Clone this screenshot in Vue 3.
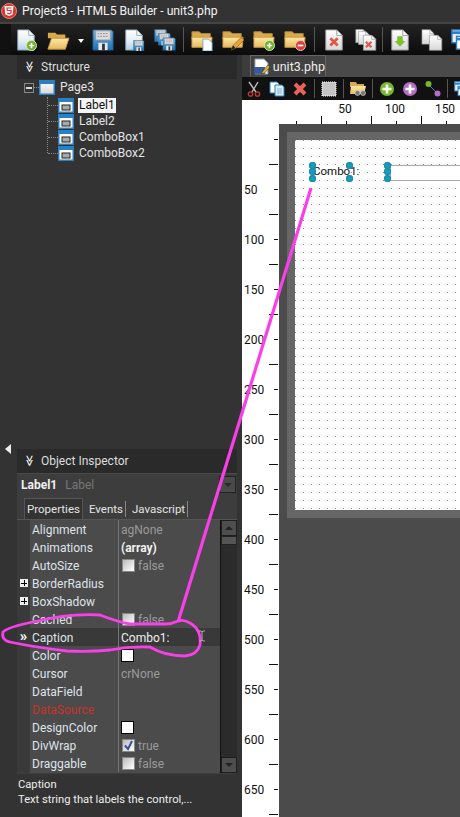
<script setup>
const mainTools = [
  { id: 'i-new', w: 22, s: 31 }, { id: 'i-open', w: 24, s: 34 }, { caret: true, s: 12 },
  { id: 'i-save', w: 22, s: 31 }, { id: 'i-saveas', w: 22, s: 31 }, { id: 'i-saveall', w: 24, s: 31 }, { sep: true, s: 6 },
  { id: 'i-fdoc', w: 24, s: 31 }, { id: 'i-fpen', w: 24, s: 31 }, { id: 'i-fadd', w: 24, s: 31 }, { id: 'i-frem', w: 24, s: 31 }, { sep: true, s: 8 },
  { id: 'i-del', w: 22, s: 31 }, { id: 'i-delall', w: 24, s: 31 }, { sep: true, s: 4 },
  { id: 'i-down', w: 22, s: 31 }, { id: 'i-copy', w: 24, s: 31 }, { id: 'i-win', w: 24, s: 31 }
]
const subTools = [
  { id: 's-cut' }, { id: 's-copy' }, { id: 's-x' }, { sep: true },
  { id: 's-box' }, { sep: true }, { id: 's-find' }, { sep: true },
  { id: 's-green' }, { id: 's-purple' }, { id: 's-link' }, { sep: true }, { id: 'i-win' }
]
const tree = [
  { name: 'Label1', selected: true }, { name: 'Label2' }, { name: 'ComboBox1' }, { name: 'ComboBox2' }
]
const props = [
  { name: 'Alignment', value: 'agNone', kind: 'dim' },
  { name: 'Animations', value: '(array)', kind: 'bold' },
  { name: 'AutoSize', value: 'false', kind: 'check' },
  { name: 'BorderRadius', plus: true },
  { name: 'BoxShadow', plus: true },
  { name: 'Cached', value: 'false', kind: 'check' },
  { name: 'Caption', value: 'Combo1:', kind: 'active', current: true },
  { name: 'Color', kind: 'colour' },
  { name: 'Cursor', value: 'crNone', kind: 'dim' },
  { name: 'DataField' },
  { name: 'DataSource', red: true },
  { name: 'DesignColor', kind: 'colour' },
  { name: 'DivWrap', value: 'true', kind: 'check', checked: true },
  { name: 'Draggable', value: 'false', kind: 'check' }
]
const hTicks = []
for (let i = 0; i < 7; i++) hTicks.push({ x: 54 + i * 25, long: i % 2 === 1 })
const hLabels = [{ x: 103, t: '50' }, { x: 153, t: '100' }, { x: 203, t: '150' }]
const vTicks = []
for (let i = 0; i < 28; i++) vTicks.push({ y: 15 + i * 25, long: i % 2 === 1 })
const vLabels = []
for (let n = 50; n <= 650; n += 50) vLabels.push({ y: 66 + (n - 50), t: String(n) })
const handles = [
  { x: 17, y: 25 }, { x: 17, y: 31 }, { x: 17, y: 38 },
  { x: 54, y: 25 }, { x: 54, y: 38 },
  { x: 92, y: 25 }, { x: 92, y: 31 }, { x: 92, y: 38 }
]
</script>

<template>
  <div class="app">
    <svg class="defs" width="0" height="0">
      <defs>
        <linearGradient id="gDoc" x1="0" y1="0" x2="0" y2="1"><stop offset="0" stop-color="#fff"/><stop offset=".55" stop-color="#e6eef2"/><stop offset="1" stop-color="#a9d3ea"/></linearGradient>
        <linearGradient id="gGray" x1="0" y1="0" x2="0" y2="1"><stop offset="0" stop-color="#fff"/><stop offset="1" stop-color="#d8d8d8"/></linearGradient>
        <linearGradient id="gFold" x1="0" y1="0" x2="0" y2="1"><stop offset="0" stop-color="#fde9a8"/><stop offset="1" stop-color="#e7b95c"/></linearGradient>
        <linearGradient id="gBlue" x1="0" y1="0" x2="0" y2="1"><stop offset="0" stop-color="#6fb6e6"/><stop offset="1" stop-color="#1f6fb0"/></linearGradient>
        <symbol id="b-doc" viewBox="0 0 24 24"><path d="M3 1h12l6 6v16H3z" fill="url(#gDoc)" stroke="#8fa6b4"/><path d="M15 1v6h6z" fill="#fff" stroke="#8fa6b4"/></symbol>
        <symbol id="b-gdoc" viewBox="0 0 24 24"><path d="M3 1h12l6 6v16H3z" fill="url(#gGray)" stroke="#999"/><path d="M15 1v6h6z" fill="#fff" stroke="#999"/></symbol>
        <symbol id="b-fold" viewBox="0 0 24 24"><path d="M1 6V3h8l2 2h10v6H1z" fill="#d9a94e" stroke="#b58a3a"/><path d="M1 20V9h22l-1 11z" fill="url(#gFold)" stroke="#c79a45"/></symbol>
        <symbol id="b-disk" viewBox="0 0 24 24"><path d="M1 1h20l2 2v20H1z" fill="url(#gBlue)" stroke="#1d5a8d"/><rect x="4" y="2" width="16" height="10" fill="#ddd" stroke="#999"/><path d="M6 5h12M6 8h12" stroke="#888" stroke-dasharray="2 1"/><rect x="7" y="15" width="10" height="8" fill="#e8e8e8"/><rect x="11" y="16" width="3" height="7" fill="#333"/></symbol>
        <symbol id="i-new" viewBox="0 0 24 24"><use href="#b-doc"/><circle cx="18" cy="18" r="5.5" fill="#6cb025" stroke="#d7eebd"/><path d="M18 15v6M15 18h6" stroke="#fff" stroke-width="1.8"/></symbol>
        <symbol id="i-open" viewBox="0 0 24 24"><path d="M1 7V4h8l2 2h9v4H1z" fill="#d9a94e"/><path d="M5 10h19l-4 12H1z" fill="url(#gFold)" stroke="#c79a45"/></symbol>
        <symbol id="i-save" viewBox="0 0 24 24"><use href="#b-disk"/></symbol>
        <symbol id="i-saveas" viewBox="0 0 24 24"><use href="#b-doc"/><g transform="translate(11 12) scale(.52)"><use href="#b-disk" width="24" height="24"/></g></symbol>
        <symbol id="i-saveall" viewBox="0 0 24 24"><g transform="scale(.6)"><use href="#b-disk" width="24" height="24"/></g><g transform="translate(4 4) scale(.6)"><use href="#b-disk" width="24" height="24"/></g><g transform="translate(9 9) scale(.62)"><use href="#b-disk" width="24" height="24"/></g></symbol>
        <symbol id="i-fdoc" viewBox="0 0 24 24"><use href="#b-fold"/><path d="M13 11h6l4 4v9H13z" fill="#fff" stroke="#6aa6cf"/></symbol>
        <symbol id="i-fpen" viewBox="0 0 24 24"><use href="#b-fold"/><path d="M10 23l2-5 9-9 3 3-9 9z" fill="#e8a33d" stroke="#8a5b1d" stroke-width=".7"/><path d="M10 23l2-5 3 3z" fill="#222"/></symbol>
        <symbol id="i-fadd" viewBox="0 0 24 24"><use href="#b-fold"/><circle cx="18" cy="18" r="5.5" fill="#6cb025" stroke="#d7eebd"/><path d="M18 15v6M15 18h6" stroke="#fff" stroke-width="1.8"/></symbol>
        <symbol id="i-frem" viewBox="0 0 24 24"><use href="#b-fold"/><circle cx="18" cy="18" r="5.5" fill="#d9433c" stroke="#f4c7c4"/><path d="M15 18h6" stroke="#fff" stroke-width="1.8"/></symbol>
        <symbol id="i-del" viewBox="0 0 24 24"><use href="#b-gdoc"/><path d="M8 10l8 8M16 10l-8 8" stroke="#e0584e" stroke-width="3"/></symbol>
        <symbol id="i-delall" viewBox="0 0 24 24"><g transform="scale(.65)"><use href="#b-gdoc" width="24" height="24"/></g><g transform="translate(3 2) scale(.65)"><use href="#b-gdoc" width="24" height="24"/></g><g transform="translate(8 6) scale(.75)"><use href="#b-gdoc" width="24" height="24"/></g><path d="M13 14l6 6M19 14l-6 6" stroke="#e0584e" stroke-width="2.4"/></symbol>
        <symbol id="i-down" viewBox="0 0 24 24"><use href="#b-gdoc"/><path d="M9 8h6v5h3l-6 6-6-6h3z" fill="#7cc02c"/></symbol>
        <symbol id="i-copy" viewBox="0 0 24 24"><g transform="scale(.72)"><use href="#b-gdoc" width="24" height="24"/></g><g transform="translate(8 6) scale(.75)"><use href="#b-gdoc" width="24" height="24"/></g></symbol>
        <symbol id="i-win" viewBox="0 0 24 24"><rect x="1" y="1" width="17" height="14" fill="#eef" stroke="#2b7fc2" stroke-width="1.5"/><path d="M1 4h17" stroke="#2b7fc2" stroke-width="3"/><rect x="6" y="8" width="17" height="14" fill="#fff" stroke="#2b7fc2" stroke-width="1.5"/><path d="M6 11h17" stroke="#2b7fc2" stroke-width="3"/></symbol>
        <symbol id="s-cut" viewBox="0 0 16 16"><path d="M3 1l7 10M12 1L6 11" stroke="#bbb" stroke-width="1.4" fill="none"/><circle cx="4.5" cy="13" r="2.2" fill="none" stroke="#c43a34" stroke-width="1.3"/><circle cx="11.5" cy="13" r="2.2" fill="none" stroke="#c43a34" stroke-width="1.3"/></symbol>
        <symbol id="s-copy" viewBox="0 0 16 16"><path d="M1 1h7l2 2v9H1z" fill="#fff" stroke="#2b7fc2"/><path d="M6 4h7l2 2v9H6z" fill="#dcebf6" stroke="#2b7fc2"/><path d="M8 8h5M8 10h5M8 12h5" stroke="#6aa6cf" stroke-width=".8"/></symbol>
        <symbol id="s-x" viewBox="0 0 16 16"><path d="M3 3l10 10M13 3L3 13" stroke="#e8635a" stroke-width="4"/></symbol>
        <symbol id="s-box" viewBox="0 0 16 16"><rect x="1" y="1" width="14" height="14" fill="#c4c4c4" stroke="#fff" stroke-dasharray="1 1"/></symbol>
        <symbol id="s-find" viewBox="0 0 16 16"><path d="M0 4V1h6l1 2h7v3H0z" fill="#d9a94e"/><path d="M1 5h15l-2 8H0z" fill="url(#gFold)"/><circle cx="7.500" cy="12" r="2.500" fill="#777" stroke="#ddd" stroke-width=".6"/><circle cx="13" cy="12" r="2.500" fill="#777" stroke="#ddd" stroke-width=".6"/></symbol>
        <symbol id="s-green" viewBox="0 0 16 16"><circle cx="8" cy="8" r="7" fill="#76b82a"/><path d="M8 3.500v9M3.500 8h9" stroke="#fff" stroke-width="2.600"/></symbol>
        <symbol id="s-purple" viewBox="0 0 16 16"><circle cx="8" cy="8" r="7" fill="#b56cc4"/><path d="M8 3.500v9M3.500 8h9" stroke="#fff" stroke-width="2.600"/></symbol>
        <symbol id="s-link" viewBox="0 0 16 16"><path d="M4 4l8 8" stroke="#4a7fd0"/><circle cx="3.500" cy="3" r="3" fill="#76b82a"/><circle cx="12.500" cy="12.500" r="3" fill="#b56cc4"/></symbol>
        <symbol id="t-page" viewBox="0 0 16 15"><rect x=".75" y=".75" width="14.500" height="13.500" fill="url(#gGray)" stroke="#2b7fc2" stroke-width="1.500"/><rect x="1" y="1" width="14" height="3" fill="#2b7fc2"/></symbol>
        <symbol id="t-ctl" viewBox="0 0 16 15"><rect x=".75" y=".75" width="14.500" height="13.500" fill="#fff" stroke="#2b7fc2" stroke-width="1.500"/><rect x="1" y="1" width="14" height="3" fill="#2b7fc2"/><rect x="4" y="7" width="8" height="5" fill="#aaa" stroke="#222"/></symbol>
      </defs>
    </svg>

    <header class="title">
      <svg class="logo" width="16" height="16" viewBox="0 0 16 16"><circle cx="8" cy="8" r="7.500" fill="#d8342c" stroke="#ee7e74"/><path d="M3.500 3h9l-.8 8.500L8 13l-3.700-1.500z" fill="#fff"/><path d="M10.500 5H6l.2 2.500h4l-.3 2.500L8 10.800 6.200 10" fill="none" stroke="#d8342c" stroke-width="1.200"/></svg>
      <span class="title-text">Project3 - HTML5 Builder - unit3.php</span>
    </header>

    <div class="main-toolbar">
      <span v-for="(t, i) in mainTools" :key="i" class="slot" :style="{ width: t.s + 'px' }">
        <span v-if="t.sep" class="tb-sep"></span>
        <span v-else-if="t.caret" class="caret"></span>
        <svg v-else :width="t.w" height="22"><use :href="'#' + t.id" :width="t.w" height="22"/></svg>
      </span>
    </div>

    <div class="body">
      <aside class="left">
        <div class="strip"><span class="collapse"></span></div>
        <div class="panels">
          <section class="structure">
            <div class="panel-head"><span class="chev">≫</span>Structure</div>
            <div class="tree">
              <div class="tree-root">
                <span class="exp"></span><span class="dot-h short"></span>
                <svg width="16" height="15"><use href="#t-page" width="16" height="15"/></svg>
                <span class="node">Page3</span>
              </div>
              <div class="tree-kids">
                <div v-for="n in tree" :key="n.name" class="tree-row">
                  <span class="dot-h"></span>
                  <svg width="16" height="15"><use href="#t-ctl" width="16" height="15"/></svg>
                  <span class="node" :class="{ selected: n.selected }">{{ n.name }}</span>
                </div>
              </div>
            </div>
          </section>

          <section class="inspector">
            <div class="panel-head"><span class="chev">≫</span>Object Inspector</div>
            <div class="combo">
              <b>Label1</b><span class="combo-type">Label</span>
              <span class="combo-btn"><i></i></span>
            </div>
            <div class="tabs">
              <span class="tab active">Properties</span>
              <span class="tab">Events</span>
              <span class="tab">Javascript</span>
            </div>
            <div class="grid-wrap">
              <div class="grid">
                <div v-for="p in props" :key="p.name" class="row" :class="{ current: p.current }">
                  <span class="gutter">
                    <span v-if="p.plus" class="plus"></span>
                    <span v-if="p.current" class="arrow">»</span>
                  </span>
                  <span class="pname" :class="{ red: p.red }">{{ p.name }}</span>
                  <span class="pval" :class="p.kind">
                    <span v-if="p.kind === 'colour'" class="swatch"></span>
                    <span v-if="p.kind === 'check'" class="cb"><svg v-if="p.checked" width="11" height="11" viewBox="0 0 11 11"><path d="M2 5.500l3 3.500 4-8" fill="none" stroke="#35529c" stroke-width="2"/></svg></span>
                    <span v-if="p.value" class="vt">{{ p.value }}</span>
                  </span>
                </div>
              </div>
              <div class="scroll">
                <span class="sb-btn"><i class="up"></i></span>
                <span class="sb-thumb"></span>
                <span class="sb-track"></span>
                <span class="sb-btn"><i class="dn"></i></span>
              </div>
            </div>
            <div class="desc">
              <div>Caption</div>
              <div>Text string that labels the control,...</div>
            </div>
          </section>
        </div>
      </aside>

      <main class="right">
        <div class="doc-tabs">
          <span class="doc-tab">
            <svg width="16" height="17" viewBox="0 0 16 17"><path d="M1 1h9l4 4v11H1z" fill="#fff" stroke="#9ab"/><rect x="0" y="9" width="11" height="7" fill="#3a5a9c"/><path d="M7 16l2-3 5-6 2 2-5 6z" fill="#e8b030" stroke="#222" stroke-width=".5"/></svg>
            unit3.php
          </span>
        </div>
        <div class="sub-toolbar">
          <template v-for="(t, i) in subTools" :key="i">
            <span v-if="t.sep" class="sub-sep"></span>
            <svg v-else class="sub-icon" width="16" height="16"><use :href="'#' + t.id" width="16" height="16"/></svg>
          </template>
        </div>
        <div class="ruler-top">
          <span v-for="t in hTicks" :key="t.x" class="h-tick" :class="{ long: t.long }" :style="{ left: t.x + 'px' }"></span>
          <span v-for="l in hLabels" :key="l.t" class="h-label" :style="{ left: l.x + 'px' }">{{ l.t }}</span>
        </div>
        <div class="work">
          <div class="ruler-left">
            <span v-for="t in vTicks" :key="t.y" class="v-tick" :class="{ long: t.long }" :style="{ top: t.y + 'px' }"></span>
            <span v-for="l in vLabels" :key="l.t" class="v-label" :style="{ top: l.y + 'px' }">{{ l.t }}</span>
          </div>
          <div class="canvas">
            <div class="form">
              <div class="page">
                <svg class="dots" width="100%" height="100%">
                  <defs><pattern id="dot" width="8" height="8" patternUnits="userSpaceOnUse"><rect width="1" height="1" fill="#8a8a8a"/></pattern></defs>
                  <rect width="100%" height="100%" fill="url(#dot)"/>
                </svg>
                <span class="caption">Combo1:</span>
                <span class="field"></span>
                <span v-for="(h, i) in handles" :key="i" class="handle" :style="{ left: h.x + 'px', top: h.y + 'px' }"></span>
              </div>
            </div>
          </div>
        </div>
      </main>
    </div>

    <svg class="ink" width="460" height="817" viewBox="0 0 460 817">
      <path d="M311 188L178 622" fill="none" stroke="#f93fe8" stroke-width="3.200"/>
      <path d="M178 621Q172 624 165 624L130 624Q118 622 100 615Q70 613 33 622Q8 627 3 632Q1 640 10 642Q33 647 67 651Q90 652 110 650Q130 646 150 647Q165 656 185 656Q197 655 200 645Q202 630 190 623Q183 619 178 621Z" fill="none" stroke="#f93fe8" stroke-width="2.800"/>
    </svg>
    <svg class="ibeam" width="8" height="12" viewBox="0 0 8 12"><path d="M1 1h2l1 1 1-1h2M4 2v8M1 11h2l1-1 1 1h2" fill="none" stroke="#aaa" stroke-width="1"/></svg>
  </div>
</template>

<style>
html, body { margin: 0; background: #333; }
</style>

<style scoped>
.app {
  position: relative; width: 460px; height: 817px; overflow: hidden;
  display: flex; flex-direction: column; background: #333; color: #e4e4e4;
  font-family: Roboto, "Noto Sans", sans-serif; font-size: 12px;
}
.defs { position: absolute; }
.title {
  height: 22px; flex: none; display: flex; align-items: center; gap: 5px; padding-left: 1px;
  background: #333; border-bottom: 2px solid #444; color: #f2f2f2; font-size: 12.200px;
}
.main-toolbar {
  height: 31px; flex: none; display: flex; align-items: center; padding-left: 10px;
  background: linear-gradient(#232323, #0b0b0b); box-sizing: border-box;
  box-shadow: inset 11px 0 0 #111;
}
.slot { flex: none; display: flex; justify-content: center; align-items: center; height: 25px; }
.tb-sep { width: 1px; height: 25px; background: #555; }
.caret { width: 0; height: 0; border: 3.500px solid transparent; border-top: 4px solid #fff; border-bottom: 0; margin-top: 2px; }

.body { flex: 1; display: flex; min-height: 0; }
.left { width: 242px; flex: none; display: flex; background: #333; }
.strip { width: 17px; flex: none; display: flex; flex-direction: column; justify-content: flex-end; padding-bottom: 363px; box-sizing: border-box; }
.collapse { width: 0; height: 0; margin-left: 5px; border: 5px solid transparent; border-right: 6px solid #eee; border-left: 0; }
.panels { width: 220px; flex: none; display: flex; flex-direction: column; }
.structure { flex: 1; min-height: 0; }
.panel-head { height: 24px; display: flex; align-items: center; background: #2a2a2a; color: #ddd; font-size: 12px; }
.chev { transform: rotate(90deg); width: 12px; margin: 0 6px 0 6px; font-size: 11px; color: #fff; line-height: 12px; text-align: center; }
.tree { padding: 1px 0 0 7px; }
.tree-root { height: 15px; display: flex; align-items: center; margin-bottom: 2px; }
.exp { width: 8px; height: 8px; border: 1px solid #888; position: relative; background: #333; }
.exp::after { content: ""; position: absolute; left: 1px; right: 1px; top: 3px; height: 2px; background: #ddd; }
.dot-h { width: 10px; border-top: 1px dotted #888; flex: none; }
.dot-h.short { width: 5px; }
.node { padding: 0 1px; margin-left: 4px; line-height: 15px; color: #e4e4e4; }
.node.selected { background: #f4f4f4; color: #111; }
.tree-kids { margin-left: 23px; border-left: 1px dotted #888; height: 56px; display: flex; flex-direction: column; }
.tree-row { height: 16px; flex: none; display: flex; align-items: center; }

.inspector { flex: none; height: 368px; display: flex; flex-direction: column; }
.combo { height: 23px; background: #3d3d3d; border-top: 1px solid #4a4a4a; box-sizing: border-box; display: flex; align-items: center; padding-left: 4px; position: relative; color: #f0f0f0; }
.combo-type { color: #777; margin-left: 8px; }
.combo-btn { position: absolute; right: 1px; top: 2px; width: 17px; height: 17px; background: #4a4a4a; border: 1px solid #222; box-sizing: border-box; display: flex; align-items: center; justify-content: center; }
.combo-btn i { border: 4px solid transparent; border-top: 4px solid #2a2a2a; border-bottom: 0; }
.tabs { height: 24px; flex: none; display: flex; align-items: flex-end; background: #3d3d3d; padding-left: 7px; border-bottom: 1px solid #555; box-sizing: border-box; font-size: 11.500px; }
.tab { padding: 0 2px; margin-right: 4px; border-right: 1px solid #888; box-sizing: border-box; height: 16px; line-height: 16px; margin-bottom: 2px; }
.tab.active { height: 21px; line-height: 21px; padding: 0 2px; margin: 0 4px 0 0; background: #333; border: 1px solid #555; border-bottom: 0; }
.grid-wrap { flex: 1; min-height: 0; display: flex; }
.grid { flex: none; width: 203px; background: #4b4b4b; overflow: hidden; box-shadow: inset 13px 0 0 #3a3a3a; }
.row { height: 18px; display: flex; align-items: center; }
.row.current { background: #393939; }
.gutter { width: 15px; flex: none; display: flex; align-items: center; justify-content: center; }
.plus { width: 8px; height: 8px; background: #eee; position: relative; margin-left: -1px; }
.plus::before { content: ""; position: absolute; left: 1px; right: 1px; top: 3.500px; height: 1px; background: #000; }
.plus::after { content: ""; position: absolute; top: 1px; bottom: 1px; left: 3.500px; width: 1px; background: #000; }
.arrow { color: #fff; font-size: 15px; line-height: 14px; font-weight: 700; margin: -2px 0 0 -2px; }
.pname { width: 86px; flex: none; color: #dfe3ea; height: 18px; line-height: 20px; }
.pname.red { color: #c8322e; }
.pval { flex: 1; height: 18px; line-height: 18px; border-left: 1px solid #777; padding-left: 2px; display: flex; align-items: center; gap: 3px; color: #9a9a9a; }
.vt { padding-top: 2px; line-height: 16px; }
.pval.bold { font-weight: 700; color: #f0f0f0; }
.pval.active { color: #eee; }
.pval.check { padding-left: 3px; }
.swatch { width: 13px; height: 13px; background: #fff; border: 1px solid #000; box-sizing: border-box; }
.cb { width: 13px; height: 13px; background: linear-gradient(135deg, #bbb, #fff); border: 1px solid #888; box-sizing: border-box; display: flex; align-items: center; justify-content: center; }
.scroll { width: 17px; flex: none; display: flex; flex-direction: column; background: #2b2b2b; border-left: 1px solid #111; box-sizing: border-box; }
.sb-btn { height: 16px; flex: none; background: #4e4e4e; border: 1px solid #1e1e1e; box-sizing: border-box; display: flex; align-items: center; justify-content: center; }
.sb-btn i { border: 4px solid transparent; }
.up { border-bottom: 4px solid #222 !important; border-top: 0 !important; }
.dn { border-top: 4px solid #222 !important; border-bottom: 0 !important; }
.sb-thumb { height: 9px; flex: none; background: #555; border: 1px solid #222; box-sizing: border-box; }
.sb-track { flex: 1; }
.desc { height: 44px; flex: none; background: #333; padding: 3px 0 0 1px; line-height: 15px; color: #eee; border-top: 1px solid #3d3d3d; box-sizing: border-box; font-size: 11.200px; }

.right { flex: 1; min-width: 0; display: flex; flex-direction: column; background: #fff; }
.doc-tabs { height: 22px; flex: none; background: #4a4a4a; padding-left: 8px; box-sizing: border-box; box-shadow: inset 8px 0 0 #3c3c3c; }
.doc-tab { height: 21px; width: 76px; display: flex; align-items: center; gap: 3px; padding-left: 3px; background: #424242; border: 1px solid #666; border-bottom: 0; box-sizing: border-box; color: #eee; font-size: 12.500px; }
.sub-toolbar { height: 23px; flex: none; display: flex; align-items: center; padding-left: 4px; background: #111; }
.sub-icon { margin-right: 7px; flex: none; }
.sub-sep { width: 1px; height: 19px; background: #555; margin-right: 6px; margin-left: -1px; flex: none; }
.ruler-top { height: 24px; flex: none; position: relative; background: #fff; }
.h-tick { position: absolute; bottom: 0; width: 1px; height: 3px; background: #111; }
.h-tick.long { height: 8px; }
.h-label { position: absolute; top: 2px; transform: translateX(-50%); color: #111; line-height: 15px; }
.work { flex: 1; min-height: 0; display: flex; }
.ruler-left { width: 37px; flex: none; position: relative; background: #fff; }
.v-tick { position: absolute; right: 1px; width: 4px; height: 1px; background: #111; }
.v-tick.long { width: 9px; }
.v-label { position: absolute; left: 2px; transform: translateY(-50%); color: #111; line-height: 15px; }
.canvas { flex: 1; min-width: 0; background: #4b4b4b; padding: 8px 0 0 8px; }
.form { height: 386px; background: #666; padding: 8px 0 8px 8px; box-sizing: border-box; }
.page { position: relative; height: 370px; background: #fff; overflow: hidden; }
.dots { position: absolute; left: 0; top: 0; }
.caption { position: absolute; left: 18px; top: 23px; color: #111; line-height: 16px; font-size: 11.500px; }
.field { position: absolute; left: 95px; top: 25px; width: 100px; height: 16px; background: #fff; border: 1px solid #aaa; box-sizing: border-box; }
.handle { position: absolute; width: 7px; height: 7px; margin: -3.500px 0 0 -3.500px; border-radius: 50%; background: #1c9cbc; box-shadow: inset 0 0 1px 1px #178aa6; }

.ink { position: absolute; left: 0; top: 0; pointer-events: none; }
.ibeam { position: absolute; left: 198px; top: 630px; }
</style>
